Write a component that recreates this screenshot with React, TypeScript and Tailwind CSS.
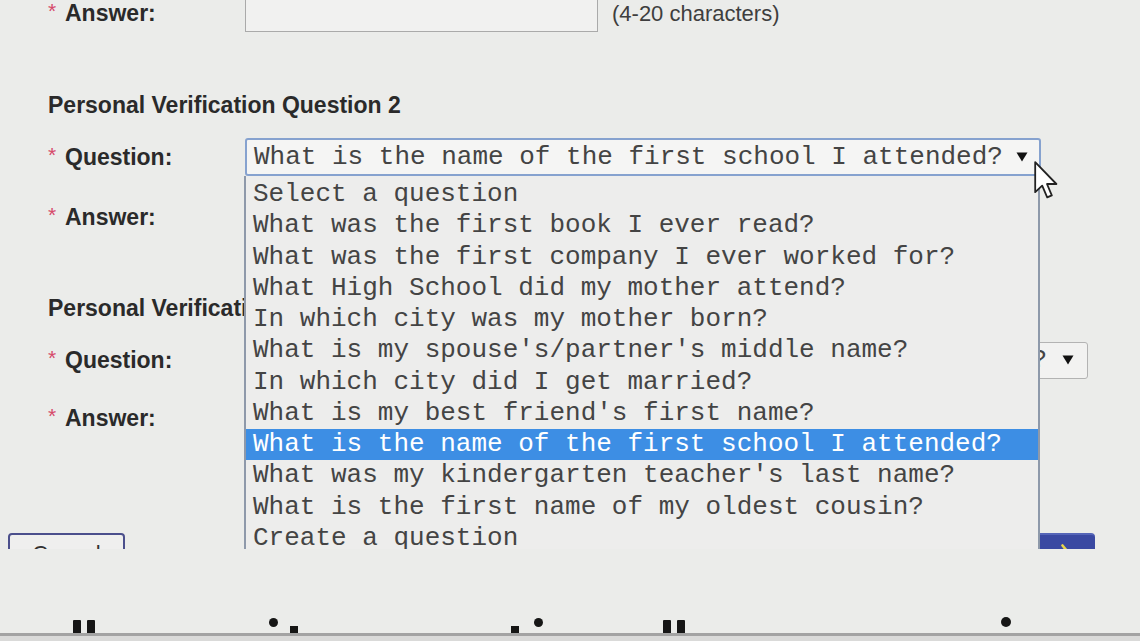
const questions = [
  'Select a question',
  'What was the first book I ever read?',
  'What was the first company I ever worked for?',
  'What High School did my mother attend?',
  'In which city was my mother born?',
  "What is my spouse's/partner's middle name?",
  'In which city did I get married?',
  "What is my best friend's first name?",
  'What is the name of the first school I attended?',
  "What was my kindergarten teacher's last name?",
  'What is the first name of my oldest cousin?',
  'Create a question',
];

const selected = 8;

const DropArrow = () => (
  <svg width="12" height="10" viewBox="0 0 12 10" className="shrink-0">
    <path d="M0.5 0.5 L11.5 0.5 L6 9.5 Z" fill="#111" />
  </svg>
);

const Cursor = () => (
  <svg width="24" height="38" viewBox="0 0 12 19" className="absolute left-[787px] top-[21px] z-20">
    <path
      d="M0.6 0.6 L0.6 15.6 L4.1 12.3 L6.6 18.2 L8.9 17.2 L6.5 11.5 L11.2 11.5 Z"
      fill="#fff"
      stroke="#222"
      strokeWidth="0.9"
      strokeLinejoin="round"
    />
  </svg>
);

const FieldLabel = ({ text }: { text: string }) => (
  <div className="w-[197px] shrink-0 flex items-center">
    <span className="text-[21px] text-[#d64a6a] leading-none -mt-[5px] w-[17px]">*</span>
    <span className="text-[23px] font-bold text-[#2a2a2a]">{text}</span>
  </div>
);

const AnswerInput = () => (
  <div className="w-[353px] h-[38px] border-[1.5px] border-[#aaaaaa] bg-[#f1f1f0]" />
);

const SectionTitle = ({ text, className }: { text: string; className: string }) => (
  <div className={`h-[30px] flex items-center text-[23px] font-bold text-[#2a2a2a] ${className}`}>
    {text}
  </div>
);

const QuestionList = () => (
  <div className="absolute left-[-3px] top-[calc(100%+2px)] w-[796px] h-[420px] z-10 pt-[3px] bg-[#ededec] border-x-2 border-[#8e99aa] font-['Liberation_Mono','Courier_New',monospace] text-[26px] text-[#444]">
    {questions.map((q, i) => (
      <div
        key={q}
        className={
          i === selected
            ? 'h-[31.25px] leading-[31.25px] pl-[7px] whitespace-pre bg-[#3d8ee4] text-white'
            : 'h-[31.25px] leading-[31.25px] pl-[7px] whitespace-pre'
        }
      >
        {q}
      </div>
    ))}
  </div>
);

export default function App() {
  return (
    <div className="w-[1140px] h-[641px] overflow-hidden bg-[#ebecea] flex flex-col font-['Liberation_Sans',Arial,sans-serif]">
      {/* form area */}
      <div className="h-[549px] shrink-0 overflow-hidden">
        <div className="pl-[48px] flex flex-col">
          <div className="-mt-[6px] h-[38px] flex items-center">
            <FieldLabel text="Answer:" />
            <AnswerInput />
            <span className="ml-[14px] text-[22px] text-[#3e3e3e]">(4-20 characters)</span>
          </div>

          <SectionTitle text="Personal Verification Question 2" className="mt-[58px]" />

          <div className="mt-[18px] h-[38px] flex items-center">
            <FieldLabel text="Question:" />
            <div className="relative w-[796px] h-[38px] border-2 border-[#86a2cf] rounded-[3px] bg-[#f5f5f4] flex items-center pl-[7px] pr-[11px] font-['Liberation_Mono','Courier_New',monospace] text-[26px] text-[#444]">
              <span className="whitespace-pre">{questions[selected]}</span>
              <span className="ml-auto">
                <DropArrow />
              </span>
              <QuestionList />
              <Cursor />
            </div>
          </div>

          <div className="mt-[22px] h-[38px] flex items-center">
            <FieldLabel text="Answer:" />
            <AnswerInput />
          </div>

          <SectionTitle text="Personal Verification Question 3" className="mt-[57px]" />

          <div className="mt-[18px] h-[38px] flex items-center">
            <FieldLabel text="Question:" />
            <div className="w-[843px] h-[37px] border-[1.5px] border-[#b3b3b3] rounded-[3px] bg-[#f2f2f1] flex items-center justify-end gap-[15px] pr-[13px] font-['Liberation_Mono','Courier_New',monospace] text-[26px] text-[#444]">
              <span className="whitespace-pre">What was the name of the first street I lived on?</span>
              <DropArrow />
            </div>
          </div>

          <div className="mt-[20px] h-[38px] flex items-center">
            <FieldLabel text="Answer:" />
            <AnswerInput />
          </div>
        </div>

        {/* buttons */}
        <div className="mt-[96px] w-[1095px] pl-[8px] flex items-start">
          <button className="w-[117px] h-[40px] border-2 border-[#4b4f8c] rounded-[4px] bg-[#efefee] text-[22px] text-[#333] flex items-center justify-center">
            Cancel
          </button>
          <button className="ml-auto w-[150px] h-[40px] rounded-t-[4px] bg-[#3a49a2] border-t-2 border-[#5565b8] flex items-start justify-end pr-[24px] pt-[9px]">
            <svg width="10" height="10" viewBox="0 0 10 10">
              <path d="M1.5 1.5 L6 7" stroke="#e8d64c" strokeWidth="2.6" strokeLinecap="round" />
            </svg>
          </button>
        </div>
      </div>

      {/* lower strip with the tops of the caption letters */}
      <div className="flex-1 flex flex-col">
        <div className="flex-1 flex items-end pl-[73px]">
          <div className="w-[8px] h-[13px] bg-[#161616] rounded-t-[1px]" />
          <div className="ml-[6px] w-[8px] h-[13px] bg-[#161616] rounded-t-[1px]" />
          <div className="ml-[174px] mb-[6px] w-[9px] h-[9px] bg-[#161616] rounded-full" />
          <div className="ml-[12px] w-[8px] h-[7px] bg-[#161616]" />
          <div className="ml-[213px] w-[8px] h-[7px] bg-[#161616]" />
          <div className="ml-[15px] mb-[6px] w-[9px] h-[9px] bg-[#161616] rounded-full" />
          <div className="ml-[120px] w-[8px] h-[13px] bg-[#161616] rounded-t-[1px]" />
          <div className="ml-[6px] w-[8px] h-[13px] bg-[#161616] rounded-t-[1px]" />
          <div className="ml-[316px] mb-[6px] w-[10px] h-[10px] bg-[#161616] rounded-full" />
        </div>
        <div className="h-[3px] bg-[#a3a3a3]" />
        <div className="h-[5px] bg-[#dadad9]" />
      </div>
    </div>
  );
}
